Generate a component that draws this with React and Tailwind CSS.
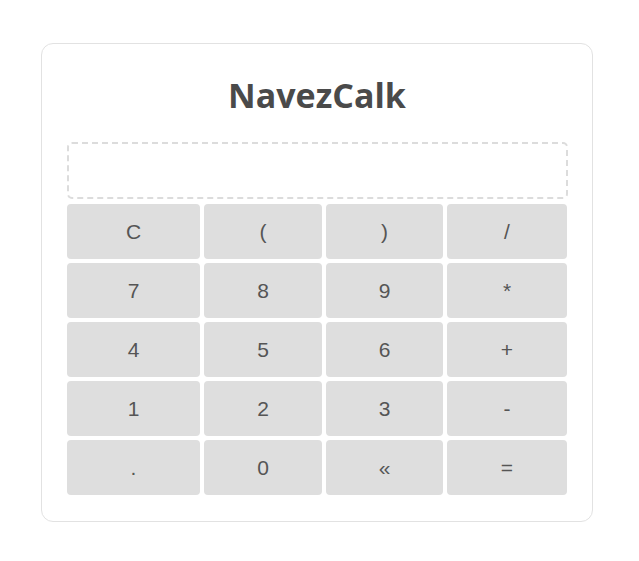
import React, { useState } from "react";

const keys = ["C", "(", ")", "/", "7", "8", "9", "*", "4", "5", "6", "+", "1", "2", "3", "-", ".", "0", "«", "="];

const App = () => {
  const [value, setValue] = useState("");

  const press = (k) => {
    if (k === "C") return setValue("");
    if (k === "«") return setValue((v) => v.slice(0, -1));
    if (k === "=") {
      try {
        // eslint-disable-next-line no-new-func
        setValue(String(Function(`return (${value})`)()));
      } catch {
        setValue("Error");
      }
      return;
    }
    setValue((v) => v + k);
  };

  return (
    <div className="w-[639px] h-[561px] bg-white pt-[43px] pl-[41px]">
      <div className="w-[552px] h-[479px] border border-[#e2e2e2] rounded-[12px] px-[25px] pt-[28px]">
        <h1 className="text-center text-[34px] leading-[46px] font-bold text-[#4a4a4a] font-['Open_Sans',sans-serif] mb-[24px]">
          NavezCalk
        </h1>

        {/* Display */}
        <div className="h-[57px] w-[501px] border-2 border-dashed border-[#dcdcdc] rounded-[5px] px-3 flex items-center justify-end text-[22px] text-[#555] font-['Liberation_Sans',sans-serif]">
          {value}
        </div>

        {/* Keys */}
        <div className="mt-[5px] grid grid-cols-[133px_118px_117px_120px] auto-rows-[55px] gap-x-[4px] gap-y-[4px]">
          {keys.map((k) => (
            <button
              key={k}
              onClick={() => press(k)}
              className="bg-[#dedede] rounded-[4px] text-[21px] text-[#555] font-['Liberation_Sans',sans-serif] flex items-center justify-center"
            >
              {k}
            </button>
          ))}
        </div>
      </div>
    </div>
  );
};

export default App;
